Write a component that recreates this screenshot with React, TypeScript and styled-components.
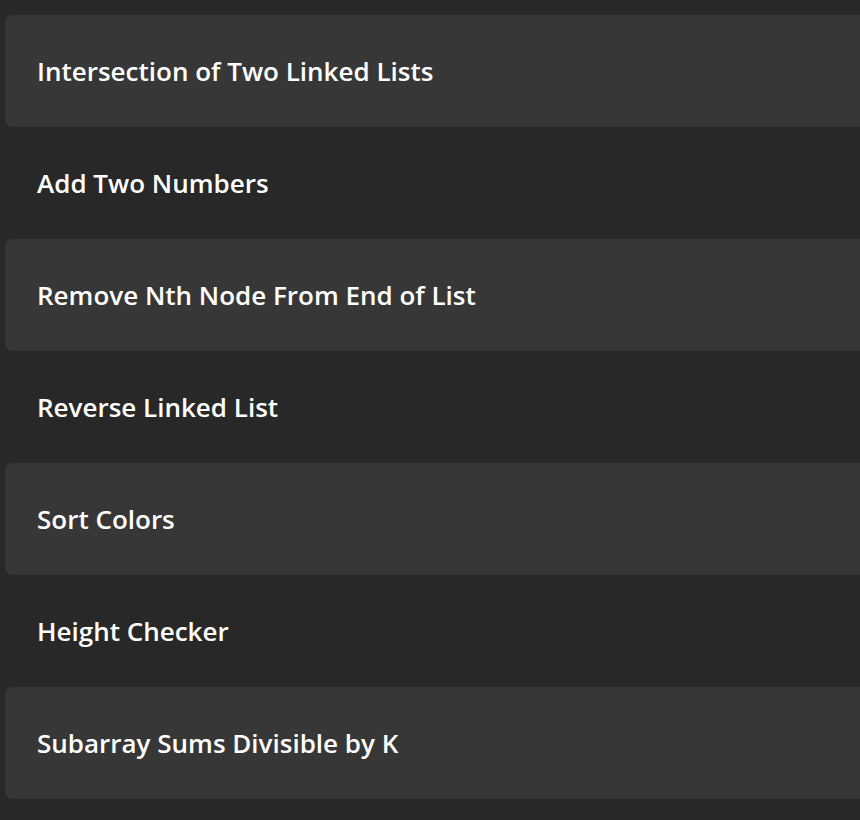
import styled, { createGlobalStyle } from "styled-components";

const GlobalStyle = createGlobalStyle`
    html, body {
        margin: 0;
        padding: 0;
        background: #282828;
        overflow: hidden;
    }
    body {
        font-family: "Open Sans", "Noto Sans", sans-serif;
    }
`;

const List = styled.ul`
    list-style: none;
    margin: 0;
    padding: 15px 0 21px 5px;
    display: flex;
    flex-direction: column;
`;

const Item = styled.li<{ $shaded: boolean }>`
    height: 112px;
    margin-right: -24px;
    display: flex;
    align-items: center;
    padding-left: 32px;
    border-radius: 8px;
    background: ${(props) => (props.$shaded ? "#373737" : "transparent")};
    color: #ffffff;
    font-size: 26px;
    font-weight: 600;
`;

const problems = [
    "Intersection of Two Linked Lists",
    "Add Two Numbers",
    "Remove Nth Node From End of List",
    "Reverse Linked List",
    "Sort Colors",
    "Height Checker",
    "Subarray Sums Divisible by K",
];

function App() {
    return (
        <>
            <GlobalStyle />
            <List>
                {problems.map((name, index) => (
                    <Item key={name} $shaded={index % 2 === 0}>
                        {name}
                    </Item>
                ))}
            </List>
        </>
    );
}

export default App;
